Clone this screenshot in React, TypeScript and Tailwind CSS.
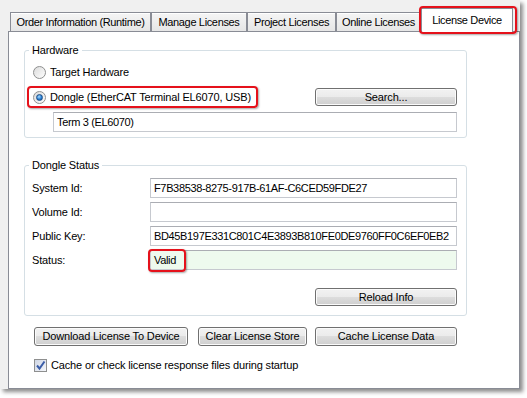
import React from "react"

const font = "font-['Liberation_Sans',Arial,sans-serif] text-[11px] tracking-[-0.15px] text-black"

const Tab = (props: { label: string; w: string }) => (
  <div
    className={`${props.w} h-[19px] border border-b-0 border-[#898c95] bg-[linear-gradient(#f5f5f5,#e6e6e6)] flex items-center justify-center whitespace-nowrap tracking-[-0.35px] shadow-[inset_0_1px_0_#fff]`}
  >
    {props.label}
  </div>
)

const Button = (props: { label: string; w: string; h?: string }) => (
  <div
    className={`${props.w} ${props.h ?? "h-[18px]"} rounded-[3px] border border-[#707070] bg-[linear-gradient(#f2f2f2,#ebebeb_50%,#dddddd_50%,#cfcfcf)] shadow-[inset_0_0_0_1px_#fbfbfb] flex items-center justify-center whitespace-nowrap`}
  >
    {props.label}
  </div>
)

const Radio = (props: { checked?: boolean }) => (
  <div className="w-[13px] h-[13px] rounded-full border border-[#8e8f8f] bg-[linear-gradient(135deg,#dcdcdc,#fdfdfd)] flex items-center justify-center shrink-0">
    {props.checked && (
      <div className="w-[7px] h-[7px] rounded-full bg-[radial-gradient(circle_at_40%_35%,#a8dcff,#2a7fd4_55%,#0d4c91)] border border-[#1e4f86]" />
    )}
  </div>
)

const Field = (props: { value?: string; green?: boolean; children?: React.ReactNode }) => (
  <div
    className={`relative flex-1 h-[20px] border border-[#c6c9cf] border-t-[#abadb3] ${props.green ? "bg-[#eefaee]" : "bg-white"} flex items-center pl-[3px] whitespace-nowrap tracking-[-0.35px]`}
  >
    {props.value}
    {props.children}
  </div>
)

const Row = (props: { label: string; children: React.ReactNode; first?: boolean }) => (
  <div className={`flex items-center pl-[7px] pr-[9px] ${props.first ? "mt-[6px]" : "mt-[4px]"}`}>
    <div className="w-[118px] shrink-0">{props.label}</div>
    {props.children}
  </div>
)

const RedBox = (props: { className: string }) => (
  <span
    className={`absolute border-2 border-[#e5111b] rounded-[4px] shadow-[1px_1px_2px_rgba(0,0,0,0.35)] pointer-events-none ${props.className}`}
  />
)

export default function App() {
  return (
    <div className={`w-[527px] h-[398px] bg-white ${font}`}>
      <div className="w-[520px] h-[389px] bg-[#f0f0f0] shadow-[3px_3px_4px_rgba(0,0,0,0.45)] flex flex-col">
        {/* tab strip */}
        <div className="h-[31px] flex items-end pl-[10px] shrink-0">
          <Tab label="Order Information (Runtime)" w="w-[141px]" />
          <Tab label="Manage Licenses" w="w-[96px]" />
          <Tab label="Project Licenses" w="w-[89px]" />
          <Tab label="Online Licenses" w="w-[85px]" />
          <div className="relative z-10 w-[92px] h-[24px] -mb-px border border-b-0 border-[#898c95] bg-white flex justify-center pt-[3px] whitespace-nowrap tracking-[-0.35px]">
            License Device
            <RedBox className="-left-[3px] -right-[5px] -top-[3px] -bottom-[2px]" />
          </div>
        </div>

        {/* tab page */}
        <div className="ml-[8px] flex-1 bg-white border border-[#898c95]">
          <fieldset className="ml-[15px] mt-[11px] w-[443px] border border-[#d5dfe5] rounded-[3px] pb-[5px]">
            <legend className="ml-[4px] px-[3px] leading-[14px]">Hardware</legend>
            <div className="mt-[6px] h-[18px] flex items-center gap-[4px] pl-[8px]">
              <Radio />
              <span>Target Hardware</span>
            </div>
            <div className="mt-[7px] h-[18px] flex items-center justify-between pl-[8px] pr-[9px]">
              <div className="relative flex items-center gap-[4px]">
                <Radio checked />
                <span className="whitespace-nowrap">Dongle (EtherCAT Terminal EL6070, USB)</span>
                <RedBox className="-left-[6px] -right-[7px] -top-[3px] -bottom-[3px]" />
              </div>
              <Button label="Search..." w="w-[142px]" />
            </div>
            <div className="mt-[6px] ml-[28px] mr-[9px] flex">
              <Field value="Term 3 (EL6070)" />
            </div>
          </fieldset>

          <fieldset className="ml-[15px] mt-[20px] w-[443px] border border-[#d5dfe5] rounded-[3px] pb-[9px]">
            <legend className="ml-[4px] px-[3px] leading-[14px]">Dongle Status</legend>
            <Row label="System Id:" first>
              <Field value="F7B38538-8275-917B-61AF-C6CED59FDE27" />
            </Row>
            <Row label="Volume Id:">
              <Field />
            </Row>
            <Row label="Public Key:">
              <Field value="BD45B197E331C801C4E3893B810FE0DE9760FF0C6EF0EB2" />
            </Row>
            <Row label="Status:">
              <Field value="Valid" green>
                <RedBox className="-left-[3px] -top-[2px] w-[38px] h-[23px]" />
              </Field>
            </Row>
            <div className="mt-[18px] flex justify-end pr-[9px]">
              <Button label="Reload Info" w="w-[142px]" />
            </div>
          </fieldset>

          <div className="mt-[11px] ml-[25px] flex">
            <Button label="Download License To Device" w="w-[154px]" h="h-[19px]" />
            <div className="ml-[10px]">
              <Button label="Clear License Store" w="w-[109px]" h="h-[19px]" />
            </div>
            <div className="ml-[8px]">
              <Button label="Cache License Data" w="w-[142px]" h="h-[19px]" />
            </div>
          </div>

          <div className="mt-[11px] ml-[25px] h-[16px] flex items-center gap-[4px]">
            <div className="w-[13px] h-[13px] border border-[#8e8f8f] bg-[linear-gradient(135deg,#cfd6e4,#f4f6fa)] flex items-center justify-center shrink-0">
              <svg width="11" height="11" viewBox="0 0 11 11">
                <path d="M2 5.5 L4.5 8.5 L9.5 1.5" fill="none" stroke="#3a5da8" strokeWidth="2" />
              </svg>
            </div>
            <span>Cache or check license response files during startup</span>
          </div>
        </div>
      </div>
    </div>
  )
}
